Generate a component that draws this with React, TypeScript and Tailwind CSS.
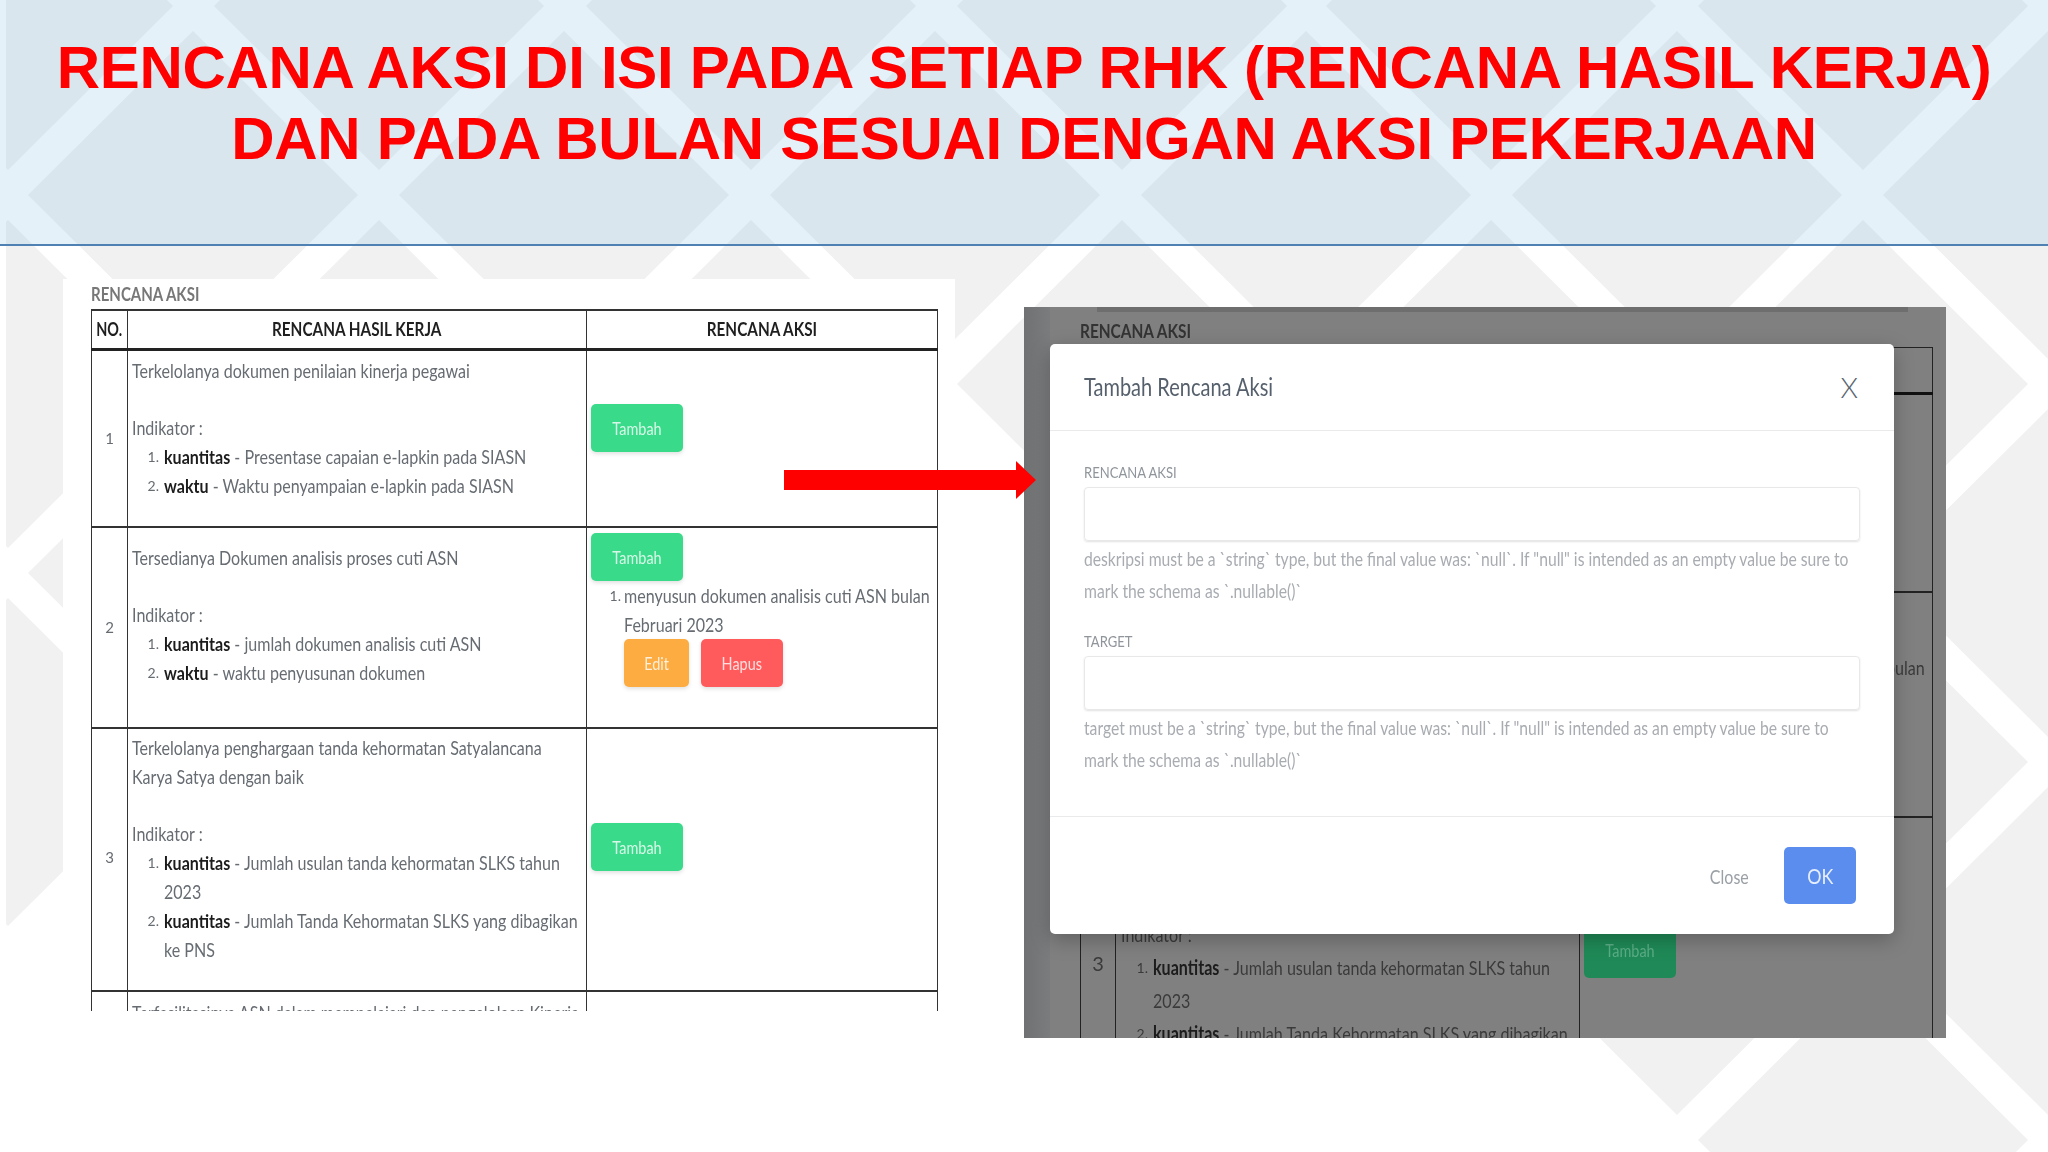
import React from 'react';

const DIAMONDS_TOP: [number, number][] = [
  [8, 6], [379, 6], [751, 6], [1122, 6], [1491, 6], [1863, 6],
  [193, 195], [564, 195], [935, 195], [1306, 195], [1677, 195], [2048, 195],
  [8, 384], [379, 384], [751, 384], [1122, 384], [1491, 384], [1863, 384],
];
const DIAMONDS_BODY: [number, number][] = [
  [193, 195], [564, 195], [935, 195], [1306, 195], [1677, 195], [2048, 195],
  [8, 384], [379, 384], [751, 384], [1122, 384], [1491, 384], [1863, 384],
  [193, 573], [2048, 573], [8, 762], [1863, 762], [1677, 951], [2048, 951], [1863, 1140],
];

const points = (cx: number, cy: number) =>
  `${cx},${cy - 164} ${cx + 165},${cy} ${cx},${cy + 164} ${cx - 165},${cy}`;

const Lattice: React.FC<{ items: [number, number][]; fill: string; className: string; bg: string }> = ({ items, fill, className, bg }) => (
  <svg className={className} width="2048" height="1152" viewBox="0 0 2048 1152">
    <rect x="0" y="0" width="2048" height="1152" fill={bg} />
    {items.map(([x, y]) => (
      <polygon key={`${x}-${y}`} points={points(x, y)} fill={fill} />
    ))}
    <rect x="0" y="0" width="6" height="1152" fill={bg} />
  </svg>
);

// Squeezed text, the source screenshot is narrower than the font
const T: React.FC<{ children: React.ReactNode; className?: string }> = ({ children, className = 'origin-left scale-x-[0.845]' }) => (
  <span className={`inline-block whitespace-nowrap ${className}`}>{children}</span>
);

const Btn: React.FC<{ label: string; className: string }> = ({ label, className }) => (
  <div className={`flex items-center justify-center rounded-[5px] text-[17px] text-white/80 shadow-[0_2px_4px_rgba(0,0,0,0.12)] ${className}`}>
    <span className="inline-block scale-x-[0.85] whitespace-nowrap">{label}</span>
  </div>
);

const Li: React.FC<{ n: number; bold: string; rest: React.ReactNode; more?: string; sx?: string }> = ({ n, bold, rest, more, sx }) => (
  <div className="flex">
    <div className="w-[32px] shrink-0 pr-[5px] text-right text-[14px]">{n}.</div>
    <div>
      <T className={sx}>
        <b className="font-bold text-[#1c1c1c]">{bold}</b> - {rest}
      </T>
      {more && (
        <div>
          <T className={sx}>{more}</T>
        </div>
      )}
    </div>
  </div>
);

const cellLine = 'border-x border-[#333]';

const LeftTable: React.FC = () => (
  <div className="h-[702px] overflow-hidden blur-[0.4px]">
    <table className="w-[846px] table-fixed border-collapse text-[19px] leading-[29px] text-[#666c72]">
      <colgroup>
        <col className="w-[36px]" />
        <col className="w-[459px]" />
        <col className="w-[351px]" />
      </colgroup>
      <thead>
        <tr className="h-[39px] border-t-2 border-b-[3px] border-t-[#333] border-b-[#222] text-[18px] font-bold text-[#1f1f1f]">
          <th className={`${cellLine} font-bold`}>
            <span className="inline-block scale-x-[0.8]">NO.</span>
          </th>
          <th className={`${cellLine} font-bold`}>
            <span className="inline-block scale-x-[0.85] whitespace-nowrap">RENCANA HASIL KERJA</span>
          </th>
          <th className={`${cellLine} font-bold`}>
            <span className="inline-block scale-x-[0.85] whitespace-nowrap">RENCANA AKSI</span>
          </th>
        </tr>
      </thead>
      <tbody>
        <tr className="h-[178px] border-b-2 border-[#333]">
          <td className={`${cellLine} text-center text-[15px]`}>1</td>
          <td className={`${cellLine} pt-[4px] pb-[25px] pl-[4px] align-middle`}>
            <T>Terkelolanya dokumen penilaian kinerja pegawai</T>
            <div className="mt-[28px]">
              <T>Indikator :</T>
            </div>
            <Li n={1} bold="kuantitas" rest="Presentase capaian e-lapkin pada SIASN" sx="origin-left scale-x-[0.845]" />
            <Li n={2} bold="waktu" rest="Waktu penyampaian e-lapkin pada SIASN" sx="origin-left scale-x-[0.845]" />
          </td>
          <td className={`${cellLine} pb-[20px] pl-[4px] align-middle`}>
            <Btn label="Tambah" className="h-[48px] w-[92px] bg-[#39da8a]" />
          </td>
        </tr>
        <tr className="h-[201px] border-b-2 border-[#333]">
          <td className={`${cellLine} text-center text-[15px]`}>2</td>
          <td className={`${cellLine} pt-[4px] pb-[29px] pl-[4px] align-middle`}>
            <T>Tersedianya Dokumen analisis proses cuti ASN</T>
            <div className="mt-[28px]">
              <T>Indikator :</T>
            </div>
            <Li n={1} bold="kuantitas" rest="jumlah dokumen analisis cuti ASN" sx="origin-left scale-x-[0.845]" />
            <Li n={2} bold="waktu" rest="waktu penyusunan dokumen" sx="origin-left scale-x-[0.845]" />
          </td>
          <td className={`${cellLine} pt-[5px] pb-[38px] pl-[4px] align-top`}>
            <Btn label="Tambah" className="h-[48px] w-[92px] bg-[#39da8a]" />
            <div className="flex">
              <div className="w-[33px] shrink-0 pr-[3px] text-right text-[14px]">1.</div>
              <div>
                <T>menyusun dokumen analisis cuti ASN bulan</T>
                <div>
                  <T>Februari 2023</T>
                </div>
                <div className="flex gap-[12px]">
                  <Btn label="Edit" className="h-[48px] w-[65px] bg-[#fdac41]" />
                  <Btn label="Hapus" className="h-[48px] w-[82px] bg-[#ff5b5c]" />
                </div>
              </div>
            </div>
          </td>
        </tr>
        <tr className="h-[263px] border-b-2 border-[#333]">
          <td className={`${cellLine} pb-[4px] text-center text-[15px]`}>3</td>
          <td className={`${cellLine} pt-[4px] pb-[26px] pl-[4px] align-middle`}>
            <T>Terkelolanya penghargaan tanda kehormatan Satyalancana</T>
            <div>
              <T>Karya Satya dengan baik</T>
            </div>
            <div className="mt-[28px]">
              <T>Indikator :</T>
            </div>
            <Li n={1} bold="kuantitas" rest="Jumlah usulan tanda kehormatan SLKS tahun" more="2023" sx="origin-left scale-x-[0.845]" />
            <Li n={2} bold="kuantitas" rest="Jumlah Tanda Kehormatan SLKS yang dibagikan" more="ke PNS" sx="origin-left scale-x-[0.845]" />
          </td>
          <td className={`${cellLine} pb-[25px] pl-[4px] align-middle`}>
            <Btn label="Tambah" className="h-[48px] w-[92px] bg-[#39da8a]" />
          </td>
        </tr>
        <tr className="h-[60px]">
          <td className={cellLine}></td>
          <td className={`${cellLine} pt-[6px] pl-[4px] align-top`}>
            <T>Terfasilitasinya ASN dalam mempelajari dan pengelolaan Kinerja</T>
          </td>
          <td className={cellLine}></td>
        </tr>
      </tbody>
    </table>
  </div>
);

const DimmedPage: React.FC = () => (
  <div className="flex h-[731px] w-[922px] bg-[#808080] blur-[0.4px]">
    <div className="w-[26px] shrink-0 bg-gradient-to-r from-[#6f7173] to-[#7b7c7e]" />
    <div className="min-w-0 flex-1 overflow-hidden">
      <div className="mr-[38px] ml-[47px] h-[5px] bg-[#6e6e6e]" />
      <div className="pt-[5px] pl-[30px] text-[19px] leading-[28px] font-bold text-[#333]">
        <T className="origin-left scale-x-[0.81]">RENCANA AKSI</T>
      </div>
      <table className="mt-[2px] ml-[30px] w-[852px] table-fixed border-collapse text-[20px] leading-[33px] text-[#3a3a3a]">
        <colgroup>
          <col className="w-[35px]" />
          <col className="w-[464px]" />
          <col className="w-[353px]" />
        </colgroup>
        <tbody>
          <tr className="h-[46px] border-t border-b-[3px] border-t-[#222] border-b-[#111]">
            <td className="border-x border-[#222]" />
            <td className="border-x border-[#222]" />
            <td className="border-x border-[#222]" />
          </tr>
          <tr className="h-[198px] border-b-2 border-[#222]">
            <td className="border-x border-[#222]" />
            <td className="border-x border-[#222]" />
            <td className="border-x border-[#222]" />
          </tr>
          <tr className="h-[225px] border-b-2 border-[#222]">
            <td className="border-x border-[#222]" />
            <td className="border-x border-[#222]" />
            <td className="border-x border-[#222] pt-[58px] pr-[7px] align-top">
              <div className="flex justify-end">
                <T className="shrink-0 origin-right scale-x-[0.805]">menyusun dokumen analisis cuti ASN bulan</T>
              </div>
            </td>
          </tr>
          <tr>
            <td className="border-x border-[#222] pt-[129px] text-center align-top">3</td>
            <td className="border-x border-[#222] pt-[100px] pl-[5px] align-top">
              <T className="origin-left scale-x-[0.805]">Indikator :</T>
              <Li n={1} bold="kuantitas" rest="Jumlah usulan tanda kehormatan SLKS tahun" more="2023" sx="origin-left scale-x-[0.805]" />
              <Li n={2} bold="kuantitas" rest="Jumlah Tanda Kehormatan SLKS yang dibagikan" sx="origin-left scale-x-[0.805]" />
            </td>
            <td className="border-x border-[#222] pt-[96px] pl-[4px] align-top">
              <div className="flex h-[64px] w-[92px] items-end justify-center rounded-[5px] bg-[#1f8a57] pb-[11px] text-[17px] text-[#5cae88]">
                <span className="inline-block scale-x-[0.85]">Tambah</span>
              </div>
            </td>
          </tr>
        </tbody>
      </table>
    </div>
  </div>
);

const Field: React.FC<{ label: string; lines: string[]; className?: string }> = ({ label, lines, className = '' }) => (
  <div className={className}>
    <div className="text-[15px] leading-[20px] text-[#8f959b]">
      <T className="origin-left scale-x-[0.87]">{label}</T>
    </div>
    <div className="mt-[5px] h-[54px] w-[776px] rounded-[4px] border border-[#e8e8e8] shadow-[0_1px_2px_rgba(0,0,0,0.12)]" />
    <div className="mt-[1px] text-[20px] leading-[32px] text-[#a8acb1]">
      {lines.map((l) => (
        <div key={l}>
          <T className="origin-left scale-x-[0.784]">{l}</T>
        </div>
      ))}
    </div>
  </div>
);

const Modal: React.FC = () => (
  <div className="absolute top-[37px] left-[26px] flex h-[590px] w-[844px] flex-col rounded-[5px] bg-white shadow-[0_6px_20px_rgba(0,0,0,0.25)]">
    <div className="flex h-[87px] shrink-0 items-center justify-between border-b border-[#e8eaec] pr-[36px] pl-[34px]">
      <T className="origin-left scale-x-[0.8] text-[25px] text-[#55606c]">Tambah Rencana Aksi</T>
      <span className="text-[28px] font-light text-[#5a6570]">X</span>
    </div>
    <div className="h-[386px] shrink-0 border-b border-[#e8eaec] pt-[31px] pl-[34px]">
      <Field
        label="RENCANA AKSI"
        lines={[
          'deskripsi must be a `string` type, but the final value was: `null`. If "null" is intended as an empty value be sure to',
          'mark the schema as `.nullable()`',
        ]}
      />
      <Field
        className="mt-[25px]"
        label="TARGET"
        lines={[
          'target must be a `string` type, but the final value was: `null`. If "null" is intended as an empty value be sure to',
          'mark the schema as `.nullable()`',
        ]}
      />
    </div>
    <div className="flex flex-1 items-start justify-end gap-[30px] pt-[30px] pr-[38px]">
      <div className="flex h-[57px] items-center text-[20px] text-[#9aa0a6]">
        <span className="inline-block scale-x-[0.8]">Close</span>
      </div>
      <div className="flex h-[57px] w-[72px] items-center justify-center rounded-[5px] bg-[#5a8dee] text-[21px] text-white/85">
        <span className="inline-block scale-x-[0.85]">OK</span>
      </div>
    </div>
  </div>
);

const App: React.FC = () => (
  <div className="relative h-[1152px] w-[2048px] overflow-hidden bg-white font-['Lato','Liberation_Sans',sans-serif]">
    <div className="relative h-[246px] overflow-hidden border-b-2 border-[#4f81b5]">
      <Lattice items={DIAMONDS_TOP} fill="#d9e6ee" bg="#e4f1f9" className="absolute top-0 left-0" />
      <h1 className="relative pt-[32px] text-center font-['Liberation_Sans',Arial,sans-serif] text-[60px] leading-[71px] font-bold tracking-[-0.29px] text-[#ff0000]">
        RENCANA AKSI DI ISI PADA SETIAP RHK (RENCANA HASIL KERJA)
        <br />
        DAN PADA BULAN SESUAI DENGAN AKSI PEKERJAAN
      </h1>
    </div>
    <div className="relative h-[906px] overflow-hidden">
      <Lattice items={DIAMONDS_BODY} fill="#f1f1f2" bg="#ffffff" className="absolute -top-[246px] left-0" />
      <div className="relative flex items-start pt-[33px] pl-[63px]">
        <div className="w-[892px] bg-white pt-[2px] pl-[28px]">
          <div className="h-[28px] text-[18px] leading-[26px] font-bold text-[#777]">
            <T className="origin-left scale-x-[0.835]">RENCANA AKSI</T>
          </div>
          <LeftTable />
        </div>
        <div className="relative mt-[28px] ml-[69px] h-[731px] w-[922px]">
          <DimmedPage />
          <Modal />
        </div>
      </div>
      <svg className="absolute top-[215px] left-[784px]" width="252" height="38" viewBox="0 0 252 38">
        <path d="M0 9H232V0L252 19L232 38V29H0Z" fill="#ff0000" />
      </svg>
    </div>
  </div>
);

export default App;
